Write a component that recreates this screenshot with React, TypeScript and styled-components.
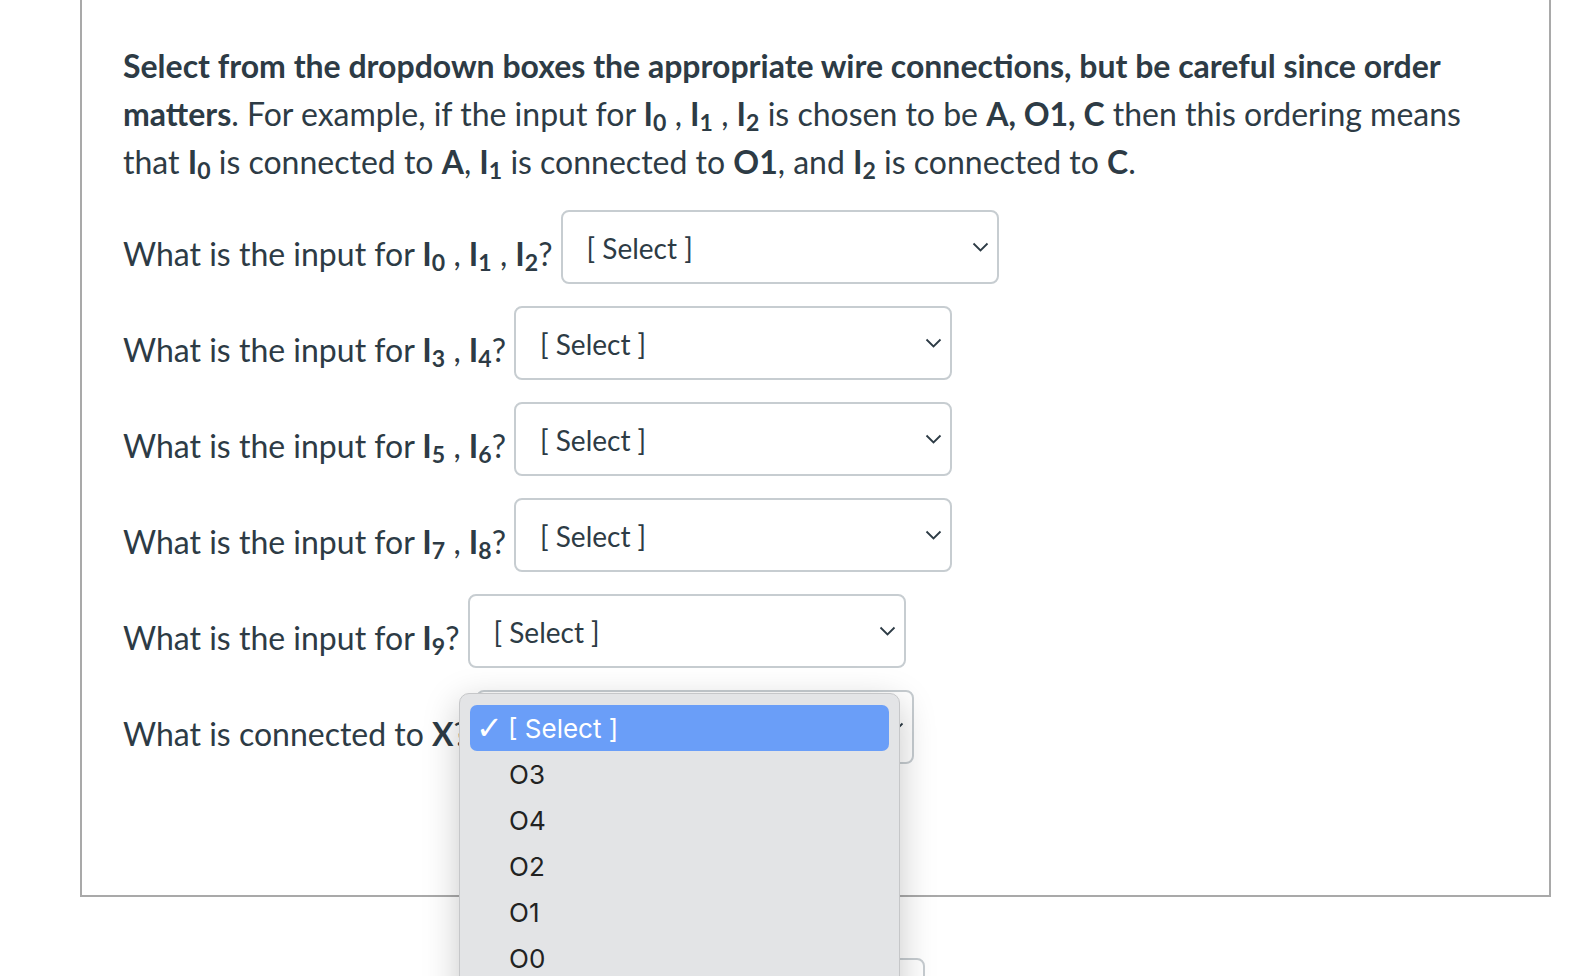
import React from "react";
import styled, { createGlobalStyle } from "styled-components";

const GlobalStyle = createGlobalStyle`
  html, body {
    margin: 0;
    padding: 0;
    background: #ffffff;
    overflow: hidden;
  }
  body {
    font-family: Lato, "Liberation Sans", sans-serif;
    color: #2d3b45;
  }
`;

const questions = [
  { label: "What is the input for", subs: ["0", "1", "2"] },
  { label: "What is the input for", subs: ["3", "4"] },
  { label: "What is the input for", subs: ["5", "6"] },
  { label: "What is the input for", subs: ["7", "8"] },
  { label: "What is the input for", subs: ["9"] },
];

const options = ["O3", "O4", "O2", "O1", "O0"];

function Chevron() {
  return (
    <svg width="17" height="10" viewBox="0 0 17 10">
      <path d="M1.5 1.5 L8.5 8.5 L15.5 1.5" fill="none" stroke="#2d3b45" strokeWidth="1.8" />
    </svg>
  );
}

function Inputs({ subs }: { subs: string[] }) {
  return (
    <>
      {subs.map((s, i) => (
        <React.Fragment key={s}>
          <b>
            I<Sub>{s}</Sub>
          </b>
          {i < subs.length - 1 ? " , " : ""}
        </React.Fragment>
      ))}
      ?
    </>
  );
}

export default function App() {
  return (
    <Page>
      <GlobalStyle />
      <Panel>
        <Intro>
          <b>Select from the dropdown boxes the appropriate wire connections, but be careful since order matters</b>.
          For example, if the input for <b>I<Sub>0</Sub></b> , <b>I<Sub>1</Sub></b> , <b>I<Sub>2</Sub></b> is chosen
          to be <b>A, O1, C</b> then this ordering means that <b>I<Sub>0</Sub></b> is connected to <b>A</b>,{" "}
          <b>I<Sub>1</Sub></b> is connected to <b>O1</b>, and <b>I<Sub>2</Sub></b> is connected to <b>C</b>.
        </Intro>
        <Rows>
          {questions.map((q, i) => (
            <Row key={i}>
              <Label>
                {q.label} <Inputs subs={q.subs} />
              </Label>
              <SelectBox>
                <span>[ Select ]</span>
                <Chevron />
              </SelectBox>
            </Row>
          ))}
          <Row>
            <Label>
              What is connected to <b>X</b>?
            </Label>
            <SelectBox>
              <span>[ Select ]</span>
              <Chevron />
            </SelectBox>
          </Row>
        </Rows>
      </Panel>
      <NextBox />
      <Menu>
        <Option $selected>
          <Check>✓</Check>[ Select ]
        </Option>
        {options.map((o) => (
          <Option key={o}>{o}</Option>
        ))}
      </Menu>
    </Page>
  );
}

const Page = styled.div`
  position: relative;
  width: 1592px;
  height: 976px;
  overflow: hidden;
`;

const Panel = styled.div`
  box-sizing: border-box;
  margin-left: 80px;
  width: 1471px;
  height: 897px;
  border: 2px solid #a9a9a9;
  border-top: none;
  padding: 42px 40px 0 41px;
`;

const Intro = styled.p`
  margin: 0;
  font-size: 32px;
  line-height: 48px;
  color: #2d3b45;
`;

const Sub = styled.sub`
  font-size: 0.72em;
  line-height: 1;
  vertical-align: -0.22em;
`;

const Rows = styled.div`
  display: flex;
  flex-direction: column;
  gap: 22px;
  margin-top: 24px;
`;

const Row = styled.div`
  display: flex;
  align-items: center;
  gap: 8px;
  height: 74px;
`;

const Label = styled.div`
  font-size: 32px;
  line-height: 48px;
  padding-top: 13px;
  white-space: nowrap;
`;

const SelectBox = styled.div`
  box-sizing: border-box;
  width: 438px;
  height: 74px;
  border: 2px solid #c7cdd1;
  border-radius: 8px;
  display: flex;
  align-items: center;
  justify-content: space-between;
  padding: 0 8px 0 24px;
  font-size: 28px;
  color: #2d3b45;
  background: #ffffff;
  span {
    padding-top: 2px;
  }
`;

const NextBox = styled.div`
  box-sizing: border-box;
  margin: 61px 0 0 487px;
  width: 438px;
  height: 74px;
  border: 2px solid #c7cdd1;
  border-radius: 8px;
`;

const Menu = styled.div`
  position: absolute;
  left: 459px;
  top: 693px;
  width: 441px;
  height: 320px;
  box-sizing: border-box;
  padding: 11px 10px;
  background: #e3e4e6;
  border: 1px solid #c6c7c9;
  border-radius: 10px;
  box-shadow: 0 10px 36px rgba(0, 0, 0, 0.22);
  font-family: Inter, "Noto Sans", sans-serif;
`;

const Option = styled.div<{ $selected?: boolean }>`
  height: 46px;
  display: flex;
  align-items: center;
  padding-left: ${(p) => (p.$selected ? "6px" : "39px")};
  border-radius: 7px;
  font-size: 26px;
  color: ${(p) => (p.$selected ? "#ffffff" : "#222222")};
  background: ${(p) => (p.$selected ? "#6a9ef8" : "transparent")};
`;

const Check = styled.span`
  font-family: "DejaVu Sans", sans-serif;
  font-size: 32px;
  line-height: 1;
  width: 32px;
`;
